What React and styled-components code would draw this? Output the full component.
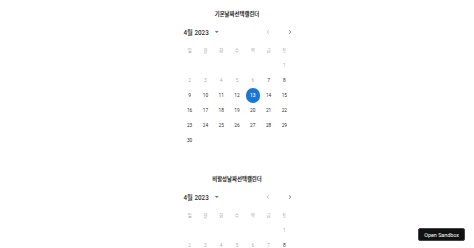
import styled, { createGlobalStyle } from "styled-components";

const GlobalStyle = createGlobalStyle`
  html, body {
    margin: 0;
    padding: 0;
    overflow: hidden;
    background: #fff;
    font-family: Roboto, "Noto Sans CJK KR", sans-serif;
  }
`;

const WEEKDAYS = ["일", "월", "화", "수", "목", "금", "토"];

const Page = styled.div`
  display: flex;
  flex-direction: column;
  align-items: center;
  padding-top: 9px;
  gap: 26px;
`;

const Section = styled.section`
  display: flex;
  flex-direction: column;
  align-items: center;
`;

const Title = styled.h2`
  margin: 0;
  font-family: "Noto Sans CJK KR", sans-serif;
  font-size: 5.4px;
  line-height: 10px;
  font-weight: 700;
  color: #222;
`;

const Calendar = styled.div`
  width: 126px;
  margin-top: 7px;
  display: flex;
  flex-direction: column;
`;

const Header = styled.div`
  display: flex;
  align-items: center;
  height: 12px;
  padding: 0 4.7px 0 9.5px;
`;

const MonthLabel = styled.div`
  font-family: Roboto, "Noto Sans CJK KR", sans-serif;
  font-size: 6.3px;
  font-weight: 500;
  color: rgba(0, 0, 0, 0.87);
  white-space: nowrap;
`;

const IconButton = styled.button`
  display: flex;
  align-items: center;
  justify-content: center;
  width: ${(p) => p.$size || 11}px;
  height: 11px;
  padding: 0;
  border: 0;
  background: none;
  color: ${(p) => (p.disabled ? "rgba(0,0,0,0.26)" : "rgba(0,0,0,0.54)")};
  svg {
    width: ${(p) => p.$icon || 8}px;
    height: ${(p) => p.$icon || 8}px;
    fill: currentColor;
  }
`;

const DropButton = styled(IconButton)`
  margin-left: 3px;
  margin-right: auto;
`;

const Spacer = styled.div`
  width: 10.5px;
`;

const Grid = styled.div`
  display: grid;
  grid-template-columns: repeat(7, 15.8px);
  justify-content: center;
`;

const WeekDay = styled.div`
  height: 16px;
  display: flex;
  align-items: center;
  justify-content: center;
  margin-top: 4px;
  font-family: "Noto Sans CJK KR", sans-serif;
  font-size: 4.7px;
  color: rgba(0, 0, 0, 0.45);
`;

const Day = styled.div`
  height: 15px;
  display: flex;
  align-items: center;
  justify-content: center;
`;

const DayNum = styled.span`
  width: 14.2px;
  height: 14.2px;
  border-radius: 50%;
  display: flex;
  align-items: center;
  justify-content: center;
  font-size: 4.8px;
  font-weight: ${(p) => (p.$selected ? 500 : 400)};
  background: ${(p) => (p.$selected ? "#1976d2" : "transparent")};
  color: ${(p) =>
    p.$selected ? "#fff" : p.$disabled ? "rgba(0,0,0,0.38)" : "rgba(0,0,0,0.87)"};
`;

const Sandbox = styled.button`
  position: fixed;
  right: 9px;
  bottom: 7px;
  height: 13px;
  padding: 0 5px;
  border: 1px solid #444;
  border-radius: 2px;
  background: #111;
  color: #fff;
  font-family: Roboto, sans-serif;
  font-size: 5.4px;
`;

const DatePicker = ({ title, minDay }) => {
  const cells = [];
  for (let i = 0; i < 6; i++) cells.push(null); // 4월 1일은 토요일
  for (let d = 1; d <= 30; d++) cells.push(d);

  return (
    <Section>
      <Title>{title}</Title>
      <Calendar>
        <Header>
          <MonthLabel>4월 2023</MonthLabel>
          <DropButton $size={9.5} $icon={9.5}>
            <svg viewBox="0 0 24 24">
              <path d="M7 10l5 5 5-5z" />
            </svg>
          </DropButton>
          <IconButton disabled>
            <svg viewBox="0 0 24 24">
              <path d="M15.41 7.41 14 6l-6 6 6 6 1.41-1.41L10.83 12z" />
            </svg>
          </IconButton>
          <Spacer />
          <IconButton>
            <svg viewBox="0 0 24 24">
              <path d="M10 6 8.59 7.41 13.17 12l-4.58 4.59L10 18l6-6z" />
            </svg>
          </IconButton>
        </Header>
        <Grid>
          {WEEKDAYS.map((w) => (
            <WeekDay key={w}>{w}</WeekDay>
          ))}
        </Grid>
        <Grid>
          {cells.map((d, i) => (
            <Day key={i}>
              {d && (
                <DayNum $disabled={d < minDay} $selected={d === 13}>
                  {d}
                </DayNum>
              )}
            </Day>
          ))}
        </Grid>
      </Calendar>
    </Section>
  );
};

export default function App() {
  return (
    <>
      <GlobalStyle />
      <Page>
        <DatePicker title="기본날짜선택캘린더" minDay={7} />
        <DatePicker title="비활성날짜선택캘린더" minDay={8} />
      </Page>
      <Sandbox>Open Sandbox</Sandbox>
    </>
  );
}
